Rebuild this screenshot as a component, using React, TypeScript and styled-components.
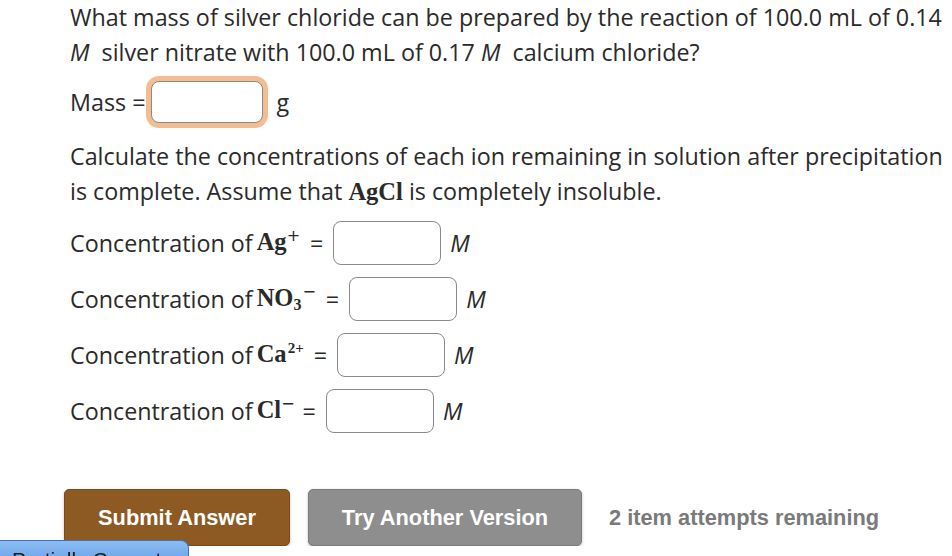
import React from "react";
import styled, { createGlobalStyle } from "styled-components";

const Global = createGlobalStyle`
  html, body { margin: 0; padding: 0; background: #fff; overflow: hidden; }
  body { font-family: "Open Sans", "Noto Sans", sans-serif; color: #2a2a2a; }
`;

const Page = styled.div`
  padding: 0 0 0 70px;
  width: 952px;
  box-sizing: border-box;
`;

const Para = styled.p<{ $top?: number }>`
  margin: ${(p) => p.$top ?? 0}px 0 0 0;
  font-size: 23.3px;
  line-height: 34.5px;
  white-space: nowrap;
`;

const Ital = styled.i`
  font-style: italic;
  margin-right: 6px;
`;

const Row = styled.div<{ $top: number }>`
  display: flex;
  align-items: center;
  margin-top: ${(p) => p.$top}px;
  height: 44px;
  font-size: 23.3px;
  line-height: 30px;
`;

const Label = styled.span`
  white-space: nowrap;
`;

const Eq = styled.span<{ $left?: number }>`
  margin: 0 10px 0 ${(p) => p.$left ?? 10}px;
`;

const Chem = styled.span<{ $gap?: number }>`
  font-family: "Liberation Serif", "Times New Roman", serif;
  font-weight: bold;
  font-size: 24.5px;
  margin-left: ${(p) => p.$gap ?? 0}px;
  white-space: nowrap;
`;

const Sup = styled.span<{ $bold?: boolean; $gap?: number }>`
  font-size: ${(p) => (p.$bold ? 15 : 16)}px;
  font-weight: ${(p) => (p.$bold ? "bold" : "normal")};
  font-family: ${(p) => (p.$bold ? '"Liberation Serif", serif' : '"DejaVu Sans", sans-serif')};
  position: relative;
  top: -9px;
  margin-left: ${(p) => p.$gap ?? 1}px;
`;

const Sub = styled.span`
  font-size: 16px;
  position: relative;
  top: 4px;
`;

const Box = styled.div`
  width: 108px;
  height: 44px;
  border: 1.5px solid #8a8a8a;
  border-radius: 8px;
  background: #fff;
  box-sizing: border-box;
`;

const FocusBox = styled(Box)`
  width: 112px;
  height: 42px;
  box-shadow: 0 0 0 5px #f3bd90;
  margin-left: 6px;
`;

const Unit = styled.span`
  margin-left: 13px;
`;

const UnitM = styled.i`
  margin-left: 9px;
  font-style: italic;
`;

const Buttons = styled.div`
  display: flex;
  align-items: center;
  margin: 56px 0 0 -6px;
`;

const Button = styled.div<{ $bg: string; $border: string; $w: number }>`
  width: ${(p) => p.$w}px;
  height: 57px;
  box-sizing: border-box;
  border-radius: 5px;
  background: ${(p) => p.$bg};
  border: 1px solid ${(p) => p.$border};
  box-shadow: 0 1px 3px rgba(0, 0, 0, 0.25);
  color: #fff;
  font-family: "Liberation Sans", Arial, sans-serif;
  font-weight: bold;
  font-size: 21.8px;
  display: flex;
  align-items: center;
  justify-content: center;
  margin-right: 18px;
`;

const Remaining = styled.span`
  margin-left: 9px;
  font-family: "Liberation Sans", Arial, sans-serif;
  font-weight: bold;
  font-size: 21.8px;
  color: #7a7a7a;
`;

const Tab = styled.div`
  position: fixed;
  left: 0;
  top: 540px;
  width: 189px;
  height: 40px;
  box-sizing: border-box;
  background: linear-gradient(#8cbcf2, #4f90e2);
  border: 1px solid #3c72c4;
  border-left: none;
  border-radius: 0 8px 0 0;
  font-family: "Liberation Sans", Arial, sans-serif;
  font-size: 21px;
  color: #1a1a1a;
  padding: 7px 0 0 12px;
  white-space: nowrap;
`;

export default function App() {
  return (
    <>
      <Global />
      <Page>
        <Para>
          What mass of silver chloride can be prepared by the reaction of 100.0 mL of 0.14
          <br />
          <Ital>M</Ital> silver nitrate with 100.0 mL of 0.17 <Ital>M</Ital> calcium chloride?
        </Para>
        <Row $top={11}>
          <Label>Mass =</Label>
          <FocusBox />
          <Unit>g</Unit>
        </Row>
        <Para $top={15}>
          Calculate the concentrations of each ion remaining in solution after precipitation
          <br />
          is complete. Assume that <Chem>AgCl</Chem> is completely insoluble.
        </Para>
        <Row $top={12}>
          <Label>Concentration of</Label>
          <Chem $gap={4}>
            Ag<Sup $gap={0}>+</Sup>
          </Chem>
          <Eq>=</Eq>
          <Box />
          <UnitM>M</UnitM>
        </Row>
        <Row $top={12}>
          <Label>Concentration of</Label>
          <Chem $gap={4}>
            NO<Sub>3</Sub>
            <Sup>−</Sup>
          </Chem>
          <Eq>=</Eq>
          <Box />
          <UnitM>M</UnitM>
        </Row>
        <Row $top={12}>
          <Label>Concentration of</Label>
          <Chem $gap={4}>
            Ca<Sup $bold $gap={1}>2+</Sup>
          </Chem>
          <Eq>=</Eq>
          <Box />
          <UnitM>M</UnitM>
        </Row>
        <Row $top={12}>
          <Label>Concentration of</Label>
          <Chem $gap={4}>
            Cl<Sup $gap={0}>−</Sup>
          </Chem>
          <Eq $left={8}>=</Eq>
          <Box />
          <UnitM>M</UnitM>
        </Row>
        <Buttons>
          <Button $bg="#8d5a24" $border="#7a4c1c" $w={226}>
            Submit Answer
          </Button>
          <Button $bg="#8e8e8e" $border="#7b7b7b" $w={274}>
            Try Another Version
          </Button>
          <Remaining>2 item attempts remaining</Remaining>
        </Buttons>
      </Page>
      <Tab>Partially Correct</Tab>
    </>
  );
}
